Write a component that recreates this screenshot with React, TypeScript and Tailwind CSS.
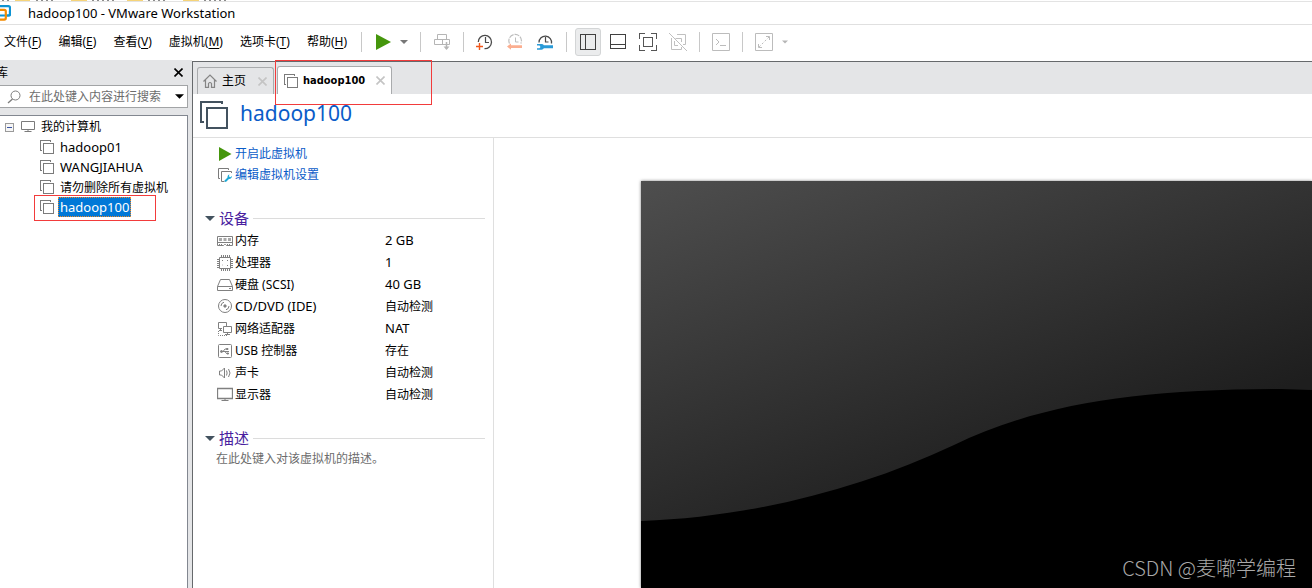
import React, { useState } from 'react';

interface IconProps {
  className?: string;
}

interface Device {
  label: string;
  value: string;
  Icon: React.FC<IconProps>;
}

const latin = /^[\x20-\x7e]+$/;

// Latin glyphs run a little smaller than the Chinese ones at the same size
const textSize = (text: string) => (latin.test(text) ? 'text-[13px]' : 'pt-[2px] text-[12px]');

const LogoIcon: React.FC<IconProps> = ({ className }) => (
  <svg className={className} width="11" height="16" viewBox="0 0 11 16" fill="none">
    <rect x="-4" y="1.200" width="14" height="9.300" rx="1.500" stroke="#0d93d2" strokeWidth="2.200" />
    <rect x="-6" y="4.800" width="11.800" height="9.800" rx="1.500" stroke="#f38b00" strokeWidth="2.200" />
    <path d="M7 10.500H8.500Q10 10.500 10 9V6" stroke="#0d93d2" strokeWidth="2.200" />
  </svg>
);

const PlayIcon: React.FC<IconProps> = ({ className }) => (
  <svg className={className} width="15" height="16" viewBox="0 0 15 16">
    <path d="M0 0L15 8L0 16Z" fill="#45960c" />
  </svg>
);

const SmallPlayIcon: React.FC<IconProps> = ({ className }) => (
  <svg className={className} width="14" height="14" viewBox="0 0 14 14">
    <path d="M1 0L13.500 7L1 14Z" fill="#45960c" />
  </svg>
);

const Caret: React.FC<IconProps> = ({ className }) => (
  <svg className={className} width="8" height="4" viewBox="0 0 8 4">
    <path d="M0 0H8L4 4Z" fill="currentColor" />
  </svg>
);

const SendKeysIcon = () => (
  <svg width="18" height="18" viewBox="0 0 18 18" fill="none" stroke="#b5b5b5">
    <path d="M4.500 1.500H13.500V6.500H4.500ZM9.500 6.500H16.500V11.500H1.500V6.500H9.500V11.500" />
    <path d="M13.500 9V16" strokeWidth="1.500" />
    <path d="M10.500 13.500H16.500L13.500 17Z" fill="#b5b5b5" stroke="none" />
  </svg>
);

const SnapshotIcon = () => (
  <svg width="18" height="18" viewBox="0 0 18 18" fill="none">
    <path d="M2.300 9A6.600 6.600 0 1 1 8.500 15.600" stroke="#4a4a4a" strokeWidth="1.300" />
    <path d="M9.500 4V9.500H13" stroke="#4a4a4a" strokeWidth="1.200" />
    <path d="M3.500 10V17M0 13.500H7" stroke="#f1571c" strokeWidth="1.400" />
  </svg>
);

const RevertIcon = () => (
  <svg width="18" height="18" viewBox="0 0 18 18" fill="none">
    <path d="M3.500 10.500A6.300 6.300 0 1 1 14.800 10.500" stroke="#bdbdbd" strokeWidth="1.200" strokeDasharray="5 1" />
    <path d="M9.500 4.500V9H12.500" stroke="#bdbdbd" />
    <path d="M1 13.500L5 10.500V12.300H16V15H5V16.800Z" fill="#fbae90" />
  </svg>
);

const ManageIcon = () => (
  <svg width="18" height="18" viewBox="0 0 18 18" fill="none">
    <path d="M3 9.500A6.300 6.300 0 1 1 15.500 10.500" stroke="#4a4a4a" strokeWidth="1.300" />
    <path d="M9.500 4V9H12.500" stroke="#4a4a4a" strokeWidth="1.200" />
    <path d="M1 11H5.500Q7.300 11 7.800 12.300H17V15.300H7.800Q7.300 16.700 5.500 16.700H1V15.300H3.500L4.500 13.900L3.500 12.400H1Z" fill="#2a9bd8" />
  </svg>
);

const LibraryIcon = () => (
  <svg width="18" height="18" viewBox="0 0 18 18" fill="none" stroke="#404040" shapeRendering="crispEdges">
    <path d="M1.500 1.500H16.500V16.500H1.500ZM6.500 1.500V16.500" />
  </svg>
);

const ThumbnailIcon = () => (
  <svg width="18" height="18" viewBox="0 0 18 18" fill="none" stroke="#404040" shapeRendering="crispEdges">
    <path d="M1.500 1.500H16.500V15.500H1.500ZM1.500 11.500H16.500" />
  </svg>
);

const FullScreenIcon = () => (
  <svg width="18" height="18" viewBox="0 0 18 18" fill="none" stroke="#555" shapeRendering="crispEdges">
    <path d="M.5 6V.5H6M12 .5H17.500V6M17.500 12V17.500H12M6 17.500H.5V12M4.500 4.500H13.500V13.500H4.500Z" />
  </svg>
);

const UnityIcon = () => (
  <svg width="18" height="18" viewBox="0 0 18 18" fill="none" stroke="#c0c0c0">
    <path d="M8 1.500H16.500V11.500H14M2.500 5V16.500H12.500V14M6.500 5.500H12.500V9M5.500 8V12.500H9" />
    <path d="M0 0L18 18" />
  </svg>
);

const ConsoleIcon = () => (
  <svg width="18" height="18" viewBox="0 0 18 18" fill="none" stroke="#bcbcbc">
    <path d="M.5.5H17.500V17.500H.5ZM4 6L7 9L4 12M8 12.500H14" />
  </svg>
);

const StretchIcon = () => (
  <svg width="18" height="18" viewBox="0 0 18 18" fill="none" stroke="#bcbcbc">
    <path d="M.5.5H17.500V17.500H.5ZM11 3.500H14.500V7M3.500 11V14.500H7" />
    <path d="M14 4L4 14" strokeDasharray="2 2" />
  </svg>
);

const VmIcon: React.FC<IconProps> = ({ className }) => (
  <svg className={className} width="14" height="14" viewBox="0 0 14 14" fill="none" stroke="#7b7b7b" shapeRendering="crispEdges">
    <path d="M2 10.500H.5V.5H10.500V2M3.500 3.500H13.500V13.500H3.500Z" />
  </svg>
);

const LargeVmIcon = () => (
  <svg width="28" height="28" viewBox="0 0 28 28" fill="none" stroke="#43525f" strokeWidth="2" shapeRendering="crispEdges">
    <path d="M4 21H1V1H22V3M7 7H27V27H7Z" />
  </svg>
);

const HomeIcon = () => (
  <svg width="14" height="14" viewBox="0 0 14 14" fill="none" stroke="#858585" strokeWidth="1.200">
    <path d="M.5 7.500L7 1L13.500 7.500M2.500 6V13.300H5.500V9.500Q7 7.500 8.500 9.500V13.300H11.500V6" />
  </svg>
);

const CloseIcon: React.FC<IconProps> = ({ className }) => (
  <svg className={className} width="9" height="9" viewBox="0 0 9 9" fill="none" stroke="currentColor" strokeWidth="1.600">
    <path d="M.5.5L8.500 8.500M8.500.5L.5 8.500" />
  </svg>
);

const SearchIcon = () => (
  <svg width="14" height="14" viewBox="0 0 14 14" fill="none" stroke="#7d7d7d">
    <circle cx="8.500" cy="5.500" r="4.500" />
    <path d="M5.500 9L1 13" strokeWidth="1.300" />
  </svg>
);

const ComputerIcon: React.FC<IconProps> = ({ className }) => (
  <svg className={className} width="14" height="12" viewBox="0 0 14 12" fill="none" stroke="#7b7b7b">
    <path d="M.5.5H13.500V8.500H.5ZM7 8.500V11M3.500 10.500H10.500" />
  </svg>
);

const EditVmIcon = () => (
  <svg width="14" height="14" viewBox="0 0 14 14" fill="none" stroke="#7b7b7b">
    <path d="M2 10.500H.5V.5H10.500V2M6.500 13.500H3.500V3.500H13.500V5" />
    <path d="M7 13.500L11 9.500" stroke="#1ba9d6" strokeWidth="2" />
    <path d="M11.500 6.500C9 7 9 10 11 11C13 11 14 9.500 14 8L12.300 9.300L10.800 8.300Z" fill="#1ba9d6" stroke="none" />
  </svg>
);

const MemoryIcon = () => (
  <svg width="16" height="16" viewBox="0 0 16 16" fill="none" stroke="#808080">
    <path d="M.5 3.500H15.500V12.500H9.500L8.500 11.500H7.500L6.500 12.500H.5ZM1 9.500H15" />
    <path d="M2 5H5V8H2ZM6.500 5H9.500V8H6.500ZM11 5H14V8H11Z" fill="#a8a8a8" stroke="none" />
    <path d="M2 11.500H6M10 11.500H14" strokeDasharray="1 1" />
  </svg>
);

const CpuIcon = () => (
  <svg width="16" height="16" viewBox="0 0 16 16" fill="none" stroke="#808080">
    <path d="M2.500 2.500H13.500V13.500H2.500Z" />
    <path d="M4 1H13M4 15H13M1 4V13M15 4V13" strokeWidth="2" strokeDasharray="1 1" />
    <path d="M5 5.500H6M5.500 5V6M10 10.500H11M10.500 10V11M10 5.500H11M5.500 10H6" />
  </svg>
);

const DiskIcon = () => (
  <svg width="16" height="16" viewBox="0 0 16 16" fill="none" stroke="#808080">
    <path d="M3.500 2.500H12.500L15.500 9.500V13.500H.5V9.500ZM.5 9.500H15.500" />
    <path d="M12 11.500H14" />
  </svg>
);

const DiscIcon = () => (
  <svg width="16" height="16" viewBox="0 0 16 16" fill="none" stroke="#808080">
    <circle cx="8" cy="8" r="6.500" />
    <circle cx="8" cy="8" r="1.200" fill="#808080" />
    <path d="M4 8A4 4 0 0 1 7 4.200M12 8A4 4 0 0 1 9 11.800" />
  </svg>
);

const NetworkIcon = () => (
  <svg width="16" height="16" viewBox="0 0 16 16" fill="none" stroke="#808080">
    <path d="M5 7.500H1.500V1.500H9.500V5M6.500 5.500H14.500V11.500H6.500ZM10.500 11.500V13.500M8 13.500H13M3.500 7.500V9.500M2 9.500H5" />
    <path d="M1.500 10V14.500H10" strokeDasharray="1 1" />
  </svg>
);

const UsbIcon = () => (
  <svg width="16" height="16" viewBox="0 0 16 16" fill="none" stroke="#808080">
    <rect x="1.500" y="1.500" width="13" height="13" rx="1" />
    <path d="M4 8.500H12M6 8.500L8 6H10M8 8.500L9.500 10.500H11" />
    <circle cx="4.500" cy="8.500" r="1" fill="#808080" />
    <path d="M9.500 5.500H11V6.500H9.500ZM10 10H11.500V11H10Z" />
  </svg>
);

const SoundIcon = () => (
  <svg width="16" height="16" viewBox="0 0 16 16" fill="none" stroke="#808080">
    <path d="M2.500 6H4.500L7.500 3V13L4.500 10H2.500Z" />
    <path d="M9.500 5.500Q10.700 8 9.500 10.500M11.500 4Q14.500 8 11.500 12" />
  </svg>
);

const DisplayIcon = () => (
  <svg width="16" height="16" viewBox="0 0 16 16" fill="none" stroke="#808080">
    <path d="M.5 1.500H15.500V11.500H.5Z" strokeWidth="1.300" />
    <path d="M8 12V14M4.500 13.500H11.500" />
  </svg>
);

const menus = [
  { label: '文件', key: 'F' },
  { label: '编辑', key: 'E' },
  { label: '查看', key: 'V' },
  { label: '虚拟机', key: 'M' },
  { label: '选项卡', key: 'T' },
  { label: '帮助', key: 'H' },
];

const machines = ['hadoop01', 'WANGJIAHUA', '请勿删除所有虚拟机', 'hadoop100'];

const devices: Device[] = [
  { label: '内存', value: '2 GB', Icon: MemoryIcon },
  { label: '处理器', value: '1', Icon: CpuIcon },
  { label: '硬盘 (SCSI)', value: '40 GB', Icon: DiskIcon },
  { label: 'CD/DVD (IDE)', value: '自动检测', Icon: DiscIcon },
  { label: '网络适配器', value: 'NAT', Icon: NetworkIcon },
  { label: 'USB 控制器', value: '存在', Icon: UsbIcon },
  { label: '声卡', value: '自动检测', Icon: SoundIcon },
  { label: '显示器', value: '自动检测', Icon: DisplayIcon },
];

const Separator = () => <div className="mx-[6px] h-5 w-px shrink-0 bg-[#c8c8c8]" />;

const ToolButton: React.FC<{ title: string; active?: boolean; children: React.ReactNode }> = ({ title, active, children }) => (
  <button title={title} className="flex h-7 w-[30px] shrink-0 items-center justify-center">
    <span className={`flex h-7 w-[26px] items-center justify-center rounded-[3px] border ${active ? 'border-[#d3d5d6] bg-[#ebeced]' : 'border-transparent'}`}>
      {children}
    </span>
  </button>
);

// Lower edge of the folder shortcuts in the window behind
const BackWindowEdge = () => (
  <div className="h-[2px] shrink-0 border-b border-[#e3e3e3]">
    <svg className="block" width="240" height="1" viewBox="0 0 240 1">
      <path d="M15 .5H30M71 .5H87M127 .5H143M183 .5H199" stroke="#f6d479" />
      <path d="M2 .5H9M36 .5H56M92 .5H114M148 .5H168M204 .5H226" stroke="#8c8c8c" strokeDasharray="2 3" />
    </svg>
  </div>
);

const Toolbar = () => (
  <div className="flex h-[35px] shrink-0 items-center pb-px">
    <nav className="flex w-[355px] shrink-0 items-center gap-[17px] pl-1 text-[12px]">
      {menus.map((menu) => (
        <button key={menu.key} className="whitespace-nowrap pb-px">
          {menu.label}(<span className="underline underline-offset-2">{menu.key}</span>)
        </button>
      ))}
    </nav>
    <Separator />
    <ToolButton title="开启此虚拟机"><PlayIcon /></ToolButton>
    <button title="电源选项" className="mr-1 flex w-3 justify-center text-[#777]"><Caret /></button>
    <Separator />
    <ToolButton title="发送 Ctrl+Alt+Del"><SendKeysIcon /></ToolButton>
    <Separator />
    <ToolButton title="拍摄快照"><SnapshotIcon /></ToolButton>
    <ToolButton title="恢复快照"><RevertIcon /></ToolButton>
    <ToolButton title="管理快照"><ManageIcon /></ToolButton>
    <Separator />
    <ToolButton title="显示库" active><LibraryIcon /></ToolButton>
    <ToolButton title="显示缩略图"><ThumbnailIcon /></ToolButton>
    <ToolButton title="全屏"><FullScreenIcon /></ToolButton>
    <ToolButton title="Unity"><UnityIcon /></ToolButton>
    <Separator />
    <ToolButton title="控制台"><ConsoleIcon /></ToolButton>
    <Separator />
    <ToolButton title="拉伸"><StretchIcon /></ToolButton>
    <button title="拉伸选项" className="flex w-3 justify-center text-[#b5b5b5]"><Caret className="w-[6px]" /></button>
  </div>
);

const Sidebar: React.FC<{ selected: string; onSelect: (name: string) => void }> = ({ selected, onSelect }) => (
  <aside className="flex w-[188px] shrink-0 flex-col bg-[#e4e5e7]">
    <div className="flex h-[25px] shrink-0 items-center justify-between pr-1">
      <h2 className="-ml-1 text-[12px]">库</h2>
      <button aria-label="关闭" className="p-px text-black">
        <CloseIcon />
      </button>
    </div>
    <div className="flex h-[23px] shrink-0 items-center border border-l-0 border-[#a2a4a6] bg-white pl-[7px] pr-[3px]">
      <SearchIcon />
      <input
        aria-label="搜索"
        placeholder="在此处键入内容进行搜索"
        className="ml-2 w-0 flex-1 text-[12px] outline-none placeholder:text-[#6d6d6d]"
      />
      <button aria-label="搜索选项" className="text-black"><Caret className="h-[5px] w-[9px]" /></button>
    </div>
    <div className="mt-[7px] flex-1 border-r border-t border-[#828790] bg-white pt-px text-[12px]">
      <div className="flex h-5 items-center pl-[5px]">
        <svg className="shrink-0" width="9" height="9" viewBox="0 0 9 9" fill="#f6f6f6" stroke="#9a9a9a">
          <rect x=".5" y=".5" width="8" height="8" />
          <path d="M2 4.500H7" stroke="#3a55a4" />
        </svg>
        <ComputerIcon className="ml-[7px] shrink-0" />
        <span className="ml-[6px]">我的计算机</span>
      </div>
      <ul>
        {machines.map((name) => {
          const isSelected = name === selected;
          return (
            <li key={name} className="relative flex h-5 items-center pl-10">
              <VmIcon className="shrink-0" />
              <button
                onClick={() => onSelect(name)}
                className={`ml-1 h-5 whitespace-nowrap px-px leading-4 ${textSize(name)} ${isSelected ? 'border border-dotted border-[#f08a28] bg-[#0078d7] text-white' : 'border border-transparent'}`}
              >
                {name}
              </button>
              {isSelected && (
                <div className="pointer-events-none absolute -top-[2px] left-[34px] h-[26px] w-[122px] border border-[#f23b3b]" />
              )}
            </li>
          );
        })}
      </ul>
    </div>
  </aside>
);

const Tabs = () => (
  <div className="relative flex h-8 shrink-0 items-end bg-[#e4e5e7] pl-1">
    <div className="flex h-[27px] w-[77px] items-center rounded-t-[3px] border border-b-0 border-[#a9abad] pl-[5px] pr-[6px]">
      <HomeIcon />
      <button className="ml-[5px] text-[12px]">主页</button>
      <button aria-label="关闭主页" className="ml-auto text-[#c4c4c4]"><CloseIcon /></button>
    </div>
    <div className="ml-[3px] flex h-7 w-[115px] items-center rounded-t-[3px] border border-b-0 border-[#a9abad] bg-white pl-[6px] pr-[6px]">
      <VmIcon />
      <button className="ml-[5px] pt-[2px] font-['DejaVu_Sans_Condensed','DejaVu_Sans',sans-serif] text-[11px] font-bold">hadoop100</button>
      <button aria-label="关闭 hadoop100" className="ml-auto text-[#c4c4c4]"><CloseIcon /></button>
    </div>
    <div className="pointer-events-none absolute -top-[2px] left-[82px] h-[45px] w-[157px] border border-[#f23b3b]" />
  </div>
);

const SectionTitle: React.FC<{ children: React.ReactNode }> = ({ children }) => (
  <div className="mt-[22px] flex h-[22px] items-center gap-1 pl-3 pr-2">
    <Caret className="h-[5px] w-[10px] text-[#43525f]" />
    <h2 className="text-[15px] leading-5 text-[#4a1fa0]">{children}</h2>
    <div className="h-px flex-1 bg-[#dcdcdc]" />
  </div>
);

const DetailsPanel = () => (
  <section className="w-[301px] shrink-0 border-r border-[#dfdfdf] pt-[5px] text-[12px]">
    <a href="#power-on" className="flex h-[21px] items-center gap-[2px] pl-[25px] text-[#0a5cc8]">
      <SmallPlayIcon className="mr-px" />
      开启此虚拟机
    </a>
    <a href="#settings" className="flex h-[21px] items-center gap-[3px] pl-[25px] text-[#0a5cc8]">
      <EditVmIcon />
      编辑虚拟机设置
    </a>

    <SectionTitle>设备</SectionTitle>
    <table>
      <tbody>
        {devices.map(({ label, value, Icon }) => (
          <tr key={label} className="h-[22px]">
            <th scope="row" className="w-[192px] p-0 pl-6 text-left font-normal">
              <span className={`flex items-center gap-[2px] leading-4 ${textSize(label)}`}>
                <Icon />
                {label}
              </span>
            </th>
            <td className={`p-0 leading-4 ${textSize(value)}`}>{value}</td>
          </tr>
        ))}
      </tbody>
    </table>

    <SectionTitle>描述</SectionTitle>
    <p className="pl-[23px] leading-5 text-[#6d6d6d]">在此处键入对该虚拟机的描述。</p>
  </section>
);

const Preview = () => (
  <div className="relative flex-1 overflow-hidden bg-black shadow-[0_0_3px_rgba(0,0,0,0.5)]">
    <svg className="block h-full w-full" viewBox="0 0 671 407" preserveAspectRatio="xMinYMin slice">
      <defs>
        <linearGradient id="screen" gradientUnits="userSpaceOnUse" x1="0" y1="0" x2="146" y2="392">
          <stop offset="0" stopColor="#4e4e4e" />
          <stop offset="1" stopColor="#1e1e1e" />
        </linearGradient>
      </defs>
      <path d="M0 0H671V209L640 208C500 208 400 222 313 264C220 308 110 336 0 340Z" fill="url(#screen)" />
    </svg>
    <span className="absolute bottom-[6px] right-4 font-['Noto_Sans_CJK_SC',sans-serif] text-[20px] font-light leading-7 text-[#a9a9a9]">
      CSDN @麦嘟学编程
    </span>
  </div>
);

const App: React.FC = () => {
  const [selected, setSelected] = useState('hadoop100');

  return (
    <div className="flex h-screen flex-col overflow-hidden bg-white font-['Noto_Sans','Noto_Sans_CJK_SC',sans-serif] text-black">
      <BackWindowEdge />
      <header className="flex h-[23px] shrink-0 items-center border-b border-[#e0e0e0]">
        <LogoIcon />
        <h1 className="ml-[17px] text-[13px] leading-5">hadoop100 - VMware Workstation</h1>
      </header>
      <Toolbar />
      <div className="flex min-h-0 flex-1">
        <Sidebar selected={selected} onSelect={setSelected} />
        <div className="w-1 shrink-0 bg-[#e4e5e7]" />
        <main className="mt-px flex min-w-0 flex-1 flex-col border-l border-t border-[#66696c]">
          <Tabs />
          <div className="flex h-11 shrink-0 items-center gap-3 border-b border-[#dfdfdf] pb-px pl-[7px]">
            <LargeVmIcon />
            <h2 className="pb-1 text-[21px] leading-7 text-[#0a5cc8]">hadoop100</h2>
          </div>
          <div className="flex min-h-0 flex-1">
            <DetailsPanel />
            <div className="flex min-w-0 flex-1 pl-[147px] pt-[43px]">
              <Preview />
            </div>
          </div>
        </main>
      </div>
    </div>
  );
};

export default App;
